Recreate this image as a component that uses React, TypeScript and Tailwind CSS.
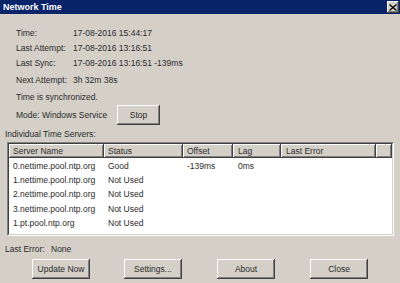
import React from 'react';

const raised =
  'bg-[#d4d0c8] shadow-[inset_-1px_-1px_#404040,inset_1px_1px_#ffffff,inset_-2px_-2px_#808080,inset_2px_2px_#d4d0c8]';

const columns = [
  { title: 'Server Name', width: 'w-[95px]', pad: 'pl-[4px]' },
  { title: 'Status', width: 'w-[79px]', pad: 'pl-[4px]' },
  { title: 'Offset', width: 'w-[50px]', pad: 'pl-[4px]' },
  { title: 'Lag', width: 'w-[48px]', pad: 'pl-[5px]' },
  { title: 'Last Error', width: 'w-[95px]', pad: 'pl-[5px]' },
];

const servers = [
  ['0.nettime.pool.ntp.org', 'Good', '-139ms', '0ms', ''],
  ['1.nettime.pool.ntp.org', 'Not Used', '', '', ''],
  ['2.nettime.pool.ntp.org', 'Not Used', '', '', ''],
  ['3.nettime.pool.ntp.org', 'Not Used', '', '', ''],
  ['1.pt.pool.ntp.org', 'Not Used', '', '', ''],
];

const info = [
  ['Time:', '17-08-2016 15:44:17'],
  ['Last Attempt:', '17-08-2016 13:16:51'],
  ['Last Sync:', '17-08-2016 13:16:51 -139ms'],
];

function Button({ label, className = '' }: { label: string; className?: string }) {
  return (
    <div className={`${raised} h-[20px] flex items-center justify-center ${className}`}>
      {label}
    </div>
  );
}

export default function App() {
  return (
    <div className="w-[400px] h-[283px] overflow-hidden bg-[#d4d0c8] text-[#2b2b2b] text-[8.5px] leading-none font-['Liberation_Sans',Arial,sans-serif]">
      {/* title bar */}
      <div className="h-[14px] bg-[#0a246a] flex items-center justify-between pl-[3px] pr-[1px]">
        <span className="text-white font-bold text-[9px]">Network Time</span>
        <div className={`${raised} w-[12px] h-[12px] flex items-center justify-center`}>
          <svg width="8" height="7" viewBox="0 0 8 7">
            <path d="M0.5 0.5 L7.5 6.5 M7.5 0.5 L0.5 6.5" stroke="#000" strokeWidth="1.3" />
          </svg>
        </div>
      </div>

      <div className="pl-[16px] pt-[12px]">
        {info.map(([k, v]) => (
          <div key={k} className="h-[15px] flex items-center">
            <span className="w-[57px]">{k}</span>
            <span>{v}</span>
          </div>
        ))}
        <div className="h-[15px] mt-[2px] flex items-center">
          <span className="w-[57px]">Next Attempt:</span>
          <span>3h 32m 38s</span>
        </div>
        <div className="h-[15px] mt-[2px] flex items-center">Time is synchronized.</div>
        <div className="h-[20px] flex items-center">
          <span className="w-[101px]">Mode: Windows Service</span>
          <Button label="Stop" className="w-[43px]" />
        </div>
      </div>

      <div className="h-[14px] mt-[2px] pl-[5px] flex items-center">Individual Time Servers:</div>

      {/* server list */}
      <div className="ml-[7px] mt-[1px] w-[387px] h-[94px] border border-t-[#808080] border-l-[#808080] border-b-white border-r-white">
        <div className="h-full border border-t-[#404040] border-l-[#404040] border-b-[#d4d0c8] border-r-[#d4d0c8] bg-white overflow-hidden">
          <div className="flex h-[14px]">
            {columns.map((c) => (
              <div key={c.title} className={`${raised} ${c.width} ${c.pad} h-full flex items-center`}>
                {c.title}
              </div>
            ))}
            <div className={`${raised} flex-1 h-full`} />
          </div>
          <div className="pt-[1px]">
            {servers.map((row) => (
              <div key={row[0]} className="flex h-[14.25px] items-center">
                {row.map((cell, i) => (
                  <div key={i} className={`${columns[i].width} ${columns[i].pad}`}>
                    {cell}
                  </div>
                ))}
              </div>
            ))}
          </div>
        </div>
      </div>

      <div className="h-[14px] mt-[6px] pl-[5px] flex items-center">
        <span className="w-[46px]">Last Error:</span>
        <span>None</span>
      </div>

      <div className="flex mt-[3px]">
        <Button label="Update Now" className="w-[58px] ml-[32px]" />
        <Button label="Settings..." className="w-[58px] ml-[34px]" />
        <Button label="About" className="w-[58px] ml-[35px]" />
        <Button label="Close" className="w-[58px] ml-[35px]" />
      </div>
    </div>
  );
}
